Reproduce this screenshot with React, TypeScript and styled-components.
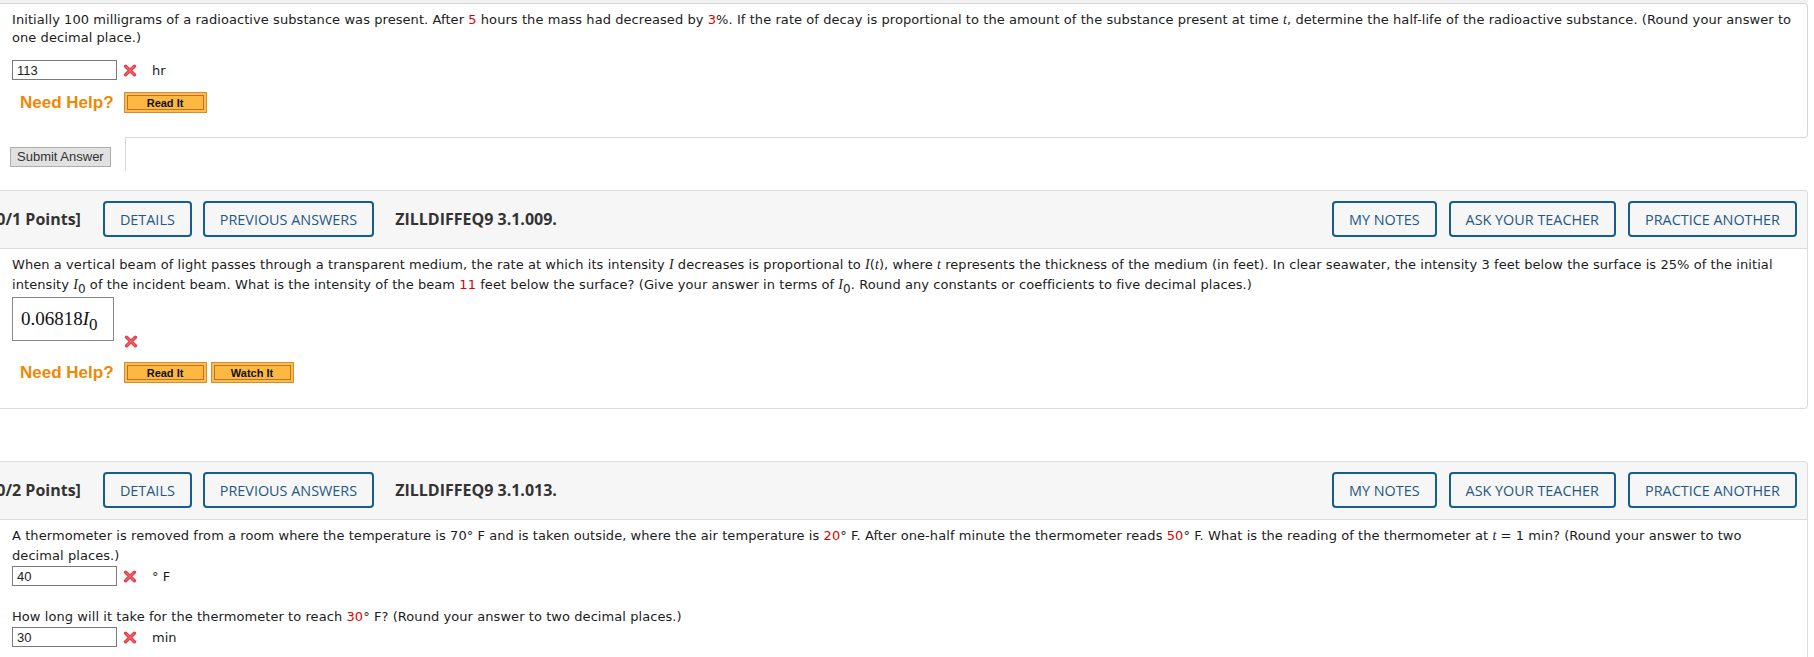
import styled, { createGlobalStyle } from 'styled-components';

const GlobalStyle = createGlobalStyle`
  html, body {
    margin: 0;
    padding: 0;
    background: #fff;
    overflow: hidden;
  }
  body {
    font-family: "DejaVu Sans", Verdana, sans-serif;
    color: #1c1c1c;
  }
`;

const Page = styled.div`
  width: 1808px;
`;

const TopStrip = styled.div`
  height: 3px;
  background: #f1f1f1;
`;

const Card = styled.div`
  border-top: 1px solid #d6d6d6;
  border-right: 1px solid #d6d6d6;
  border-bottom: 1px solid #d6d6d6;
  border-radius: 0 4px 4px 0;
  padding: 7px 10px 24px 12px;
`;

const Prompt = styled.p<{ $lh?: number; $mt?: number }>`
  margin: ${(p) => p.$mt ?? 0}px 0 0;
  font-size: 13px;
  letter-spacing: 0.07px;
  line-height: ${(p) => p.$lh ?? 20}px;
  white-space: nowrap;
  color: #1c1c1c;
`;

const Red = styled.span`
  color: #e00000;
`;

const MathVar = styled.i`
  font-family: "Liberation Serif", "Times New Roman", serif;
  font-size: 14px;
`;

const Sub = styled.sub`
  font-size: 12px;
  vertical-align: -4px;
  line-height: 0;
`;

const AnswerRow = styled.div<{ $mt?: number }>`
  display: flex;
  align-items: center;
  margin-top: ${(p) => p.$mt ?? 0}px;
  height: 20px;
`;

const TextInput = styled.input`
  box-sizing: border-box;
  width: 105px;
  height: 20px;
  margin: 0;
  padding: 0 4px;
  border: 1px solid #7a7a7a;
  font-family: "Liberation Sans", Arial, sans-serif;
  font-size: 13px;
  color: #222;
  background: #fff;
  outline: none;
`;

const Wrong = styled.svg<{ $ml?: number; $mb?: number }>`
  flex: none;
  margin-left: ${(p) => p.$ml ?? 6}px;
  margin-bottom: ${(p) => p.$mb ?? 0}px;
`;

const Unit = styled.span`
  margin-left: 15px;
  font-size: 13px;
  color: #1c1c1c;
`;

const HelpRow = styled.div<{ $mt: number }>`
  display: flex;
  align-items: center;
  gap: 4px;
  margin-top: ${(p) => p.$mt}px;
  padding-left: 8px;
`;

const NeedHelp = styled.span`
  margin-right: 6px;
  font-family: "Liberation Sans", Arial, sans-serif;
  font-weight: bold;
  font-size: 17px;
  color: #f08705;
`;

const HelpButton = styled.button`
  box-sizing: border-box;
  width: 83px;
  height: 21px;
  padding: 0;
  border: 1px solid #d98b30;
  background: #fdb841;
  box-shadow: inset 0 0 0 2px #fdbb48, inset 0 0 0 3px #b37634;
  font-family: "Liberation Sans", Arial, sans-serif;
  font-weight: bold;
  font-size: 11px;
  color: #111;
`;

const SubmitRow = styled.div`
  display: grid;
  grid-template-columns: 126px 1fr;
  height: 33px;
  margin-bottom: 19px;
`;

const SubmitCell = styled.div`
  box-sizing: border-box;
  margin-top: -1px;
  padding: 9px 0 0 10px;
  background: #fff;
  border-right: 1px solid #d6d6d6;
`;

const SubmitButton = styled.button`
  box-sizing: border-box;
  height: 20px;
  padding: 0 6px;
  border: 1px solid #adadad;
  background: #e1e1e1;
  font-family: "Liberation Sans", Arial, sans-serif;
  font-size: 13px;
  color: #333;
`;

const Section = styled.section`
  margin-bottom: 52px;
`;

const SectionHeader = styled.div`
  display: flex;
  align-items: center;
  background: #f6f6f6;
  border-top: 1px solid #dcdcdc;
  border-right: 1px solid #dcdcdc;
  border-bottom: 1px solid #dcdcdc;
  border-top-right-radius: 4px;
  padding: 10px 10px 11px 0;
`;

const Points = styled.span`
  margin-left: -9px;
  margin-right: 22px;
  font-family: "Open Sans", sans-serif;
  font-weight: 700;
  font-size: 16px;
  color: #333;
  white-space: nowrap;
`;

const ButtonGroup = styled.div`
  display: flex;
  gap: 11px;
`;

const RightGroup = styled.div`
  display: flex;
  gap: 12px;
  margin-left: auto;
`;

const OutlineButton = styled.button`
  box-sizing: border-box;
  height: 36px;
  padding: 0 15px;
  border: 2px solid #135d8f;
  border-radius: 4px;
  background: transparent;
  font-family: "Open Sans", sans-serif;
  font-size: 14.4px;
  font-weight: 500;
  color: #245883;
  white-space: nowrap;
`;

const Code = styled.span`
  margin-left: 21px;
  font-family: "Open Sans", sans-serif;
  font-weight: 700;
  font-size: 16px;
  color: #333;
`;

const SectionBody = styled.div`
  border-right: 1px solid #dcdcdc;
  border-bottom: 1px solid #dcdcdc;
  border-bottom-right-radius: 4px;
  padding: 6px 10px 25px 12px;
`;

const MathRow = styled.div`
  display: flex;
  align-items: flex-end;
  margin-top: 2px;
`;

const MathBox = styled.div`
  box-sizing: border-box;
  width: 102px;
  height: 44px;
  padding: 0 0 0 8px;
  display: flex;
  align-items: center;
  border: 1px solid #888;
  font-family: "Liberation Serif", "Times New Roman", serif;
  font-size: 19px;
  color: #111;
`;

const MathSub = styled.span`
  font-size: 17px;
  position: relative;
  top: 6px;
`;

const XMark = ({ ml, mb }: { ml?: number; mb?: number }) => (
  <Wrong $ml={ml} $mb={mb} width="14" height="13" viewBox="0 0 14 13">
    <path d="M2.6 2.2 L11.4 10.8 M11.4 2.2 L2.6 10.8" stroke="#e3404b" strokeWidth="3.4" strokeLinecap="round" />
    <path d="M3 2.6 L11 10.4 M11 2.6 L3 10.4" stroke="#f07a82" strokeWidth="1" strokeLinecap="round" />
  </Wrong>
);

const Header = ({ points, code }: { points: string; code: string }) => (
  <SectionHeader>
    <Points>{points}</Points>
    <ButtonGroup>
      <OutlineButton>DETAILS</OutlineButton>
      <OutlineButton>PREVIOUS ANSWERS</OutlineButton>
    </ButtonGroup>
    <Code>{code}</Code>
    <RightGroup>
      <OutlineButton>MY NOTES</OutlineButton>
      <OutlineButton>ASK YOUR TEACHER</OutlineButton>
      <OutlineButton>PRACTICE ANOTHER</OutlineButton>
    </RightGroup>
  </SectionHeader>
);

const I0 = () => (
  <>
    <MathVar>I</MathVar>
    <Sub>0</Sub>
  </>
);

export default function App() {
  return (
    <Page>
      <GlobalStyle />
      <TopStrip />

      <Card>
        <Prompt $lh={18}>
          Initially 100 milligrams of a radioactive substance was present. After <Red>5</Red> hours the mass had
          decreased by <Red>3</Red>%. If the rate of decay is proportional to the amount of the substance present at
          time <MathVar>t</MathVar>, determine the half-life of the radioactive substance. (Round your answer to
          <br />
          one decimal place.)
        </Prompt>
        <AnswerRow $mt={13}>
          <TextInput readOnly value="113" />
          <XMark />
          <Unit>hr</Unit>
        </AnswerRow>
        <HelpRow $mt={12}>
          <NeedHelp>Need Help?</NeedHelp>
          <HelpButton>Read It</HelpButton>
        </HelpRow>
      </Card>

      <SubmitRow>
        <SubmitCell>
          <SubmitButton>Submit Answer</SubmitButton>
        </SubmitCell>
        <div />
      </SubmitRow>

      <Section>
        <Header points="[0/1 Points]" code="ZILLDIFFEQ9 3.1.009." />
        <SectionBody>
          <Prompt>
            When a vertical beam of light passes through a transparent medium, the rate at which its intensity{' '}
            <MathVar>I</MathVar> decreases is proportional to <MathVar>I</MathVar>(<MathVar>t</MathVar>), where{' '}
            <MathVar>t</MathVar> represents the thickness of the medium (in feet). In clear seawater, the intensity 3
            feet below the surface is 25% of the initial
            <br />
            intensity <I0 /> of the incident beam. What is the intensity of the beam <Red>11</Red> feet below the
            surface? (Give your answer in terms of <I0 />. Round any constants or coefficients to five decimal places.)
          </Prompt>
          <MathRow>
            <MathBox>
              0.06818<i>I</i>
              <MathSub>0</MathSub>
            </MathBox>
            <XMark ml={10} mb={-7} />
          </MathRow>
          <HelpRow $mt={21}>
            <NeedHelp>Need Help?</NeedHelp>
            <HelpButton>Read It</HelpButton>
            <HelpButton>Watch It</HelpButton>
          </HelpRow>
        </SectionBody>
      </Section>

      <Section>
        <Header points="[0/2 Points]" code="ZILLDIFFEQ9 3.1.013." />
        <SectionBody>
          <Prompt>
            A thermometer is removed from a room where the temperature is 70° F and is taken outside, where the air
            temperature is <Red>20</Red>° F. After one-half minute the thermometer reads <Red>50</Red>° F. What is the
            reading of the thermometer at <MathVar>t</MathVar> = 1 min? (Round your answer to two
            <br />
            decimal places.)
          </Prompt>
          <AnswerRow>
            <TextInput readOnly value="40" />
            <XMark />
            <Unit>° F</Unit>
          </AnswerRow>
          <Prompt $mt={21}>
            How long will it take for the thermometer to reach <Red>30</Red>° F? (Round your answer to two decimal
            places.)
          </Prompt>
          <AnswerRow>
            <TextInput readOnly value="30" />
            <XMark />
            <Unit>min</Unit>
          </AnswerRow>
        </SectionBody>
      </Section>
    </Page>
  );
}
